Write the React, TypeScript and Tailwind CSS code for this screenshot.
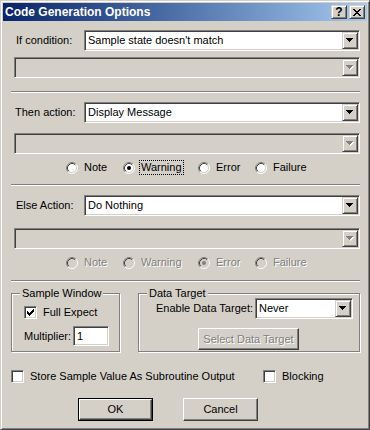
import React from "react";

const sunken =
  "border border-t-[#808080] border-l-[#808080] border-b-white border-r-white shadow-[inset_1px_1px_0_#404040,inset_-1px_-1px_0_#d4d0c8]";
const raised =
  "border border-t-white border-l-white border-b-[#404040] border-r-[#404040] shadow-[inset_-1px_-1px_0_#808080]";
const smallRaised =
  "border border-t-[#d4d0c8] border-l-[#d4d0c8] border-b-[#404040] border-r-[#404040] shadow-[inset_1px_1px_0_#fff,inset_-1px_-1px_0_#808080]";
const etched = "border border-[#808080] shadow-[inset_1px_1px_0_#fff,1px_1px_0_#fff]";
const dimText = "text-[#808080] [text-shadow:1px_1px_0_#fff]";

function Arrow({ disabled }: { disabled?: boolean }) {
  const d = "M0 0h7v1H0zM1 1h5v1H1zM2 2h3v1H2zM3 3h1v1H3z";
  return (
    <svg width="8" height="5" viewBox="0 0 8 5" shapeRendering="crispEdges">
      {disabled && <path d={d} fill="#fff" transform="translate(1 1)" />}
      <path d={d} fill={disabled ? "#808080" : "#000"} />
    </svg>
  );
}

function Combo({
  value,
  disabled,
  className = "",
}: {
  value?: string;
  disabled?: boolean;
  className?: string;
}) {
  return (
    <div
      className={`${sunken} h-[21px] flex p-[1px] ${disabled ? "bg-[#d4d0c8]" : "bg-white"} ${className}`}
    >
      <div className="flex-1 flex items-center pl-[2px] whitespace-nowrap overflow-hidden">
        {value}
      </div>
      <div className={`${smallRaised} w-[16px] bg-[#d4d0c8] flex items-center justify-center`}>
        <Arrow disabled={disabled} />
      </div>
    </div>
  );
}

function Radio({
  label,
  checked,
  disabled,
  focused,
  className = "",
}: {
  label: string;
  checked?: boolean;
  disabled?: boolean;
  focused?: boolean;
  className?: string;
}) {
  return (
    <div className={`flex items-center ${className}`}>
      <svg width="12" height="12" viewBox="0 0 12 12" className="shrink-0">
        <circle cx="6" cy="6" r="5" fill={disabled ? "#d4d0c8" : "#fff"} />
        <path d="M2.11 9.89A5.5 5.5 0 0 1 9.89 2.11" fill="none" stroke="#808080" />
        <path d="M9.89 2.11A5.5 5.5 0 0 1 2.11 9.89" fill="none" stroke="#fff" />
        <path d="M2.82 9.18A4.5 4.5 0 0 1 9.18 2.82" fill="none" stroke="#404040" />
        <path d="M9.18 2.82A4.5 4.5 0 0 1 2.82 9.18" fill="none" stroke="#d4d0c8" />
        {checked && <circle cx="6" cy="6" r="2" fill={disabled ? "#808080" : "#000"} />}
      </svg>
      <span
        className={`ml-[4px] px-[1px] border border-dotted ${focused ? "border-black" : "border-transparent"} ${disabled ? dimText : ""}`}
      >
        {label}
      </span>
    </div>
  );
}

function Check({ checked, label, className = "" }: { checked?: boolean; label: string; className?: string }) {
  return (
    <div className={`flex items-center ${className}`}>
      <div className={`${sunken} w-[13px] h-[13px] bg-white flex items-center justify-center shrink-0`}>
        {checked && (
          <svg width="7" height="7" viewBox="0 0 7 7" shapeRendering="crispEdges">
            <path
              d="M6 0h1v1H6zM5 1h2v1H5zM0 2h1v1H0zM4 2h3v1H4zM0 3h2v1H0zM3 3h3v1H3zM0 4h5v1H0zM1 5h3v1H1zM2 6h1v1H2z"
              fill="#000"
            />
          </svg>
        )}
      </div>
      <span className="ml-[6px]">{label}</span>
    </div>
  );
}

function Separator({ className = "" }: { className?: string }) {
  return <div className={`h-[2px] border-t border-t-[#808080] border-b border-b-white ${className}`} />;
}

function Group({ title, className = "", children }: { title: string; className?: string; children: React.ReactNode }) {
  return (
    <div className={`relative ${etched} ${className}`}>
      <span className="absolute -top-[7px] left-[8px] px-[2px] bg-[#d4d0c8] leading-[13px]">{title}</span>
      {children}
    </div>
  );
}

export default function App() {
  return (
    <div className="w-[370px] h-[430px] bg-[#d4d0c8] border border-t-[#d4d0c8] border-l-[#d4d0c8] border-b-[#404040] border-r-[#404040] shadow-[inset_1px_1px_0_#fff,inset_-1px_-1px_0_#808080] p-[2px] font-['Liberation_Sans',Arial,sans-serif] text-[11px] leading-[13px] text-black select-none">
      {/* title bar */}
      <div className="h-[18px] bg-gradient-to-r from-[#0a246a] to-[#a6caf0] flex items-center pl-[2px] pr-[2px]">
        <span className="flex-1 text-white font-bold text-[12px]">Code Generation Options</span>
        <div className={`${smallRaised} w-[16px] h-[14px] bg-[#d4d0c8] flex items-center justify-center font-bold text-[12px] leading-none`}>
          ?
        </div>
        <div className={`${smallRaised} ml-[2px] w-[16px] h-[14px] bg-[#d4d0c8] flex items-center justify-center`}>
          <svg width="8" height="7" viewBox="0 0 8 7" shapeRendering="crispEdges">
            <path
              d="M0 0h2v1H0zM6 0h2v1H6zM1 1h2v1H1zM5 1h2v1H5zM2 2h4v1H2zM3 3h2v1H3zM2 4h4v1H2zM1 5h2v1H1zM5 5h2v1H5zM0 6h2v1H0zM6 6h2v1H6z"
              fill="#000"
            />
          </svg>
        </div>
      </div>

      {/* body */}
      <div className="flex flex-col pl-[8px] pr-[7px]">
        <div className="mt-[9px] flex items-center">
          <span className="w-[73px] pl-[5px]">If condition:</span>
          <Combo className="flex-1" value="Sample state doesn't match" />
        </div>
        <Combo disabled className="ml-[3px] mt-[6px]" />
        <Separator className="mt-[13px]" />

        <div className="mt-[9px] flex items-center">
          <span className="w-[73px] pl-[4px]">Then action:</span>
          <Combo className="flex-1" value="Display Message" />
        </div>
        <Combo disabled className="ml-[3px] mt-[10px]" />
        <div className="mt-[6px] h-[15px] flex items-center pl-[55px]">
          <Radio label="Note" className="w-[57px]" />
          <Radio label="Warning" checked focused className="w-[75px]" />
          <Radio label="Error" className="w-[57px]" />
          <Radio label="Failure" />
        </div>
        <Separator className="mt-[9px]" />

        <div className="mt-[9px] flex items-center">
          <span className="w-[73px] pl-[5px]">Else Action:</span>
          <Combo className="flex-1" value="Do Nothing" />
        </div>
        <Combo disabled className="ml-[3px] mt-[12px]" />
        <div className="mt-[6px] h-[15px] flex items-center pl-[55px]">
          <Radio label="Note" disabled className="w-[57px]" />
          <Radio label="Warning" disabled className="w-[75px]" />
          <Radio label="Error" disabled checked className="w-[57px]" />
          <Radio label="Failure" disabled />
        </div>
        <Separator className="mt-[10px]" />

        <div className="mt-[11px] flex gap-[18px]">
          <Group title="Sample Window" className="w-[109px] h-[59px] pl-[12px] pt-[12px] flex flex-col">
            <Check checked label="Full Expect" />
            <div className="mt-[7px] flex items-center">
              <span>Multiplier:</span>
              <div className={`${sunken} ml-[2px] w-[36px] h-[20px] bg-white flex items-center pl-[3px]`}>1</div>
            </div>
          </Group>
          <Group title="Data Target" className="flex-1 h-[59px] pt-[4px] flex flex-col">
            <div className="flex items-center justify-end pr-[6px]">
              <span className="mr-[2px]">Enable Data Target:</span>
              <Combo className="w-[98px]" value="Never" />
            </div>
            <div
              className={`${raised} bg-[#d4d0c8] mt-[9px] ml-[59px] w-[101px] h-[22px] flex items-center justify-center ${dimText}`}
            >
              Select Data Target
            </div>
          </Group>
        </div>

        <div className="mt-[18px] flex items-center">
          <Check label="Store Sample Value As Subroutine Output" className="w-[252px]" />
          <Check label="Blocking" />
        </div>

        <div className="mt-[15px] flex pl-[67px] gap-[30px]">
          <div className="w-[75px] h-[23px] border border-black p-0">
            <div className={`${raised} w-full h-full bg-[#d4d0c8] flex items-center justify-center`}>OK</div>
          </div>
          <div className={`${raised} w-[75px] h-[23px] bg-[#d4d0c8] flex items-center justify-center`}>Cancel</div>
        </div>
      </div>
    </div>
  );
}
